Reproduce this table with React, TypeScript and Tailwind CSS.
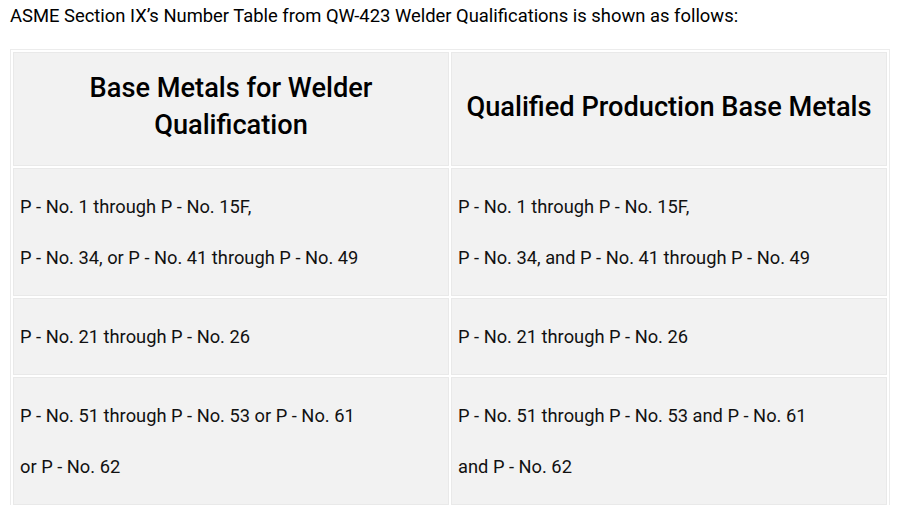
import React from 'react';

const ROWS: [string[], string[]][] = [
  [
    ['P - No. 1 through P - No. 15F,', 'P - No. 34, or P - No. 41 through P - No. 49'],
    ['P - No. 1 through P - No. 15F,', 'P - No. 34, and P - No. 41 through P - No. 49'],
  ],
  [['P - No. 21 through P - No. 26'], ['P - No. 21 through P - No. 26']],
  [
    ['P - No. 51 through P - No. 53 or P - No. 61', 'or P - No. 62'],
    ['P - No. 51 through P - No. 53 and P - No. 61', 'and P - No. 62'],
  ],
];

const Cell: React.FC<{ lines: string[] }> = ({ lines }) => (
  <td className="w-1/2 border border-[#e9e9e9] bg-[#f2f2f2] px-[6px] py-[25px] align-middle">
    <div className="flex flex-col gap-[26px]">
      {lines.map((l, i) => (
        <p key={i} className="text-[18.3px] leading-[25px] text-[#111]">
          {l}
        </p>
      ))}
    </div>
  </td>
);

export default function App() {
  return (
    <div className="min-h-screen bg-white px-[10px] pt-[5px] font-['Roboto',sans-serif]">
      <p className="text-[18.4px] leading-[22px] text-black">
        ASME Section IX’s Number Table from QW-423 Welder Qualifications is shown as follows:
      </p>

      <table className="mt-[22px] w-[880px] table-fixed border-separate border-spacing-[2px] border border-[#ececec]">
        <thead>
          <tr>
            <th className="w-1/2 border border-[#e9e9e9] bg-[#f2f2f2] px-[50px] pt-[17px] pb-[21px] text-center align-middle text-[27.2px] font-medium leading-[37px] text-black">
              Base Metals for Welder Qualification
            </th>
            <th className="w-1/2 border border-[#e9e9e9] bg-[#f2f2f2] px-1 pt-[17px] pb-[21px] text-center align-middle text-[27.2px] font-medium leading-[37px] text-black">
              Qualified Production Base Metals
            </th>
          </tr>
        </thead>
        <tbody>
          {ROWS.map(([a, b], i) => (
            <tr key={i}>
              <Cell lines={a} />
              <Cell lines={b} />
            </tr>
          ))}
        </tbody>
      </table>
    </div>
  );
}
